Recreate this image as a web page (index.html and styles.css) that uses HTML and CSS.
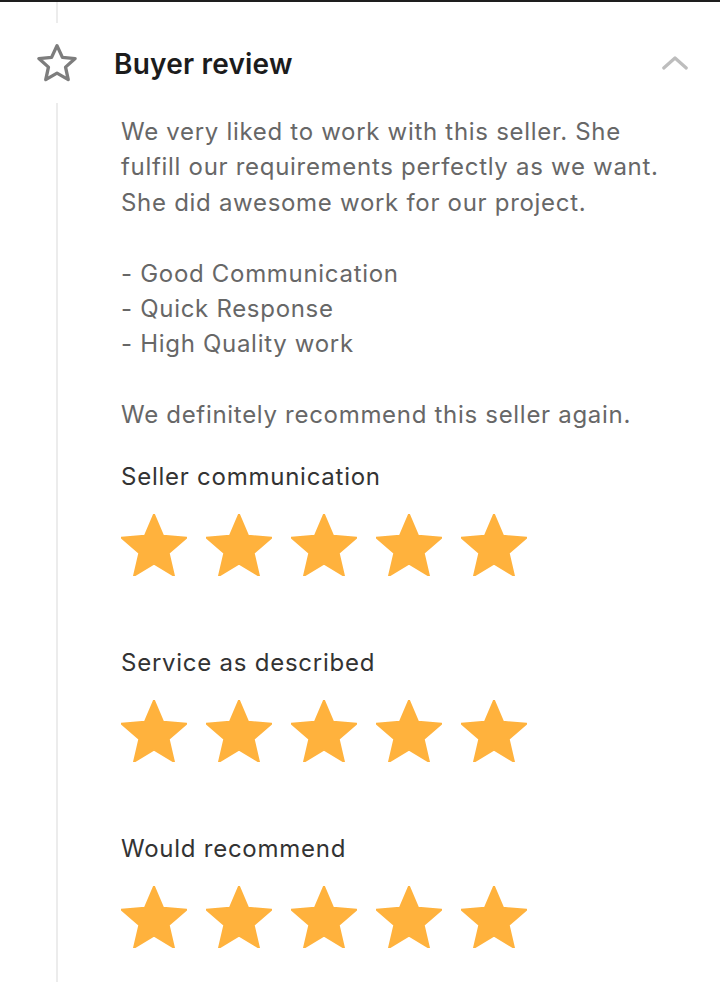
FILE: index.html
```html
<!DOCTYPE html>
<html>
<head>
    <meta charset="UTF-8">
    <meta name="viewport" content="width=device-width, initial-scale=1">
    <title>Buyer review</title>
    <link rel="stylesheet" href="styles.css">
</head>
<body>

<section class="review">
    <div class="rail">
        <span class="rail-line rail-line-top"></span>
        <svg class="rail-icon" viewBox="0 0 24 24">
            <path d="M12 3.2l2.6 5.6 6.1.6-4.6 4.1 1.3 6-5.4-3.1-5.4 3.1 1.3-6-4.6-4.1 6.1-.6z"/>
        </svg>
        <span class="rail-line"></span>
    </div>

    <div class="content">
        <header class="review-head">
            <h2>Buyer review</h2>
            <svg class="chevron" viewBox="0 0 24 24">
                <path d="M3 16l9-8 9 8"/>
            </svg>
        </header>

        <p class="review-text">We very liked to work with this seller. She
fulfill our requirements perfectly as we want.
She did awesome work for our project.

- Good Communication
- Quick Response
- High Quality work

We definitely recommend this seller again.</p>

        <div class="rating">
            <div class="rating-label">Seller communication</div>
            <div class="stars" data-score="5"></div>
        </div>
        <div class="rating">
            <div class="rating-label">Service as described</div>
            <div class="stars" data-score="5"></div>
        </div>
        <div class="rating">
            <div class="rating-label">Would recommend</div>
            <div class="stars" data-score="5"></div>
        </div>
    </div>
</section>

<script>
// fill each rating row with its stars
const starPath = 'M12 17.27L18.18 21l-1.64-7.03L22 9.24l-7.19-.61L12 2 9.19 8.63 2 9.24l5.46 4.73L5.82 21z';

document.querySelectorAll('.stars').forEach(row => {
    const score = Number(row.dataset.score);
    for (let i = 0; i < 5; i++) {
        row.insertAdjacentHTML('beforeend',
            `<svg class="star${i < score ? ' on' : ''}" viewBox="2 2 20 19"><path d="${starPath}"/></svg>`);
    }
});
</script>
</body>
</html>
```

FILE: styles.css
```css
*, *::after, *::before {
    box-sizing: border-box;
}

html, body {
    margin: 0;
    padding: 0;
    background: #fff;
    font-family: Inter, "Liberation Sans", sans-serif;
}

body {
    border-top: 2px solid #1e1e1e;
}

.review {
    display: flex;
    min-height: 980px;
}

.rail {
    width: 114px;
    flex: none;
    display: flex;
    flex-direction: column;
    align-items: center;
}

.rail-line {
    width: 2px;
    flex: 1;
    background: #ececec;
}

.rail-line-top {
    flex: none;
    height: 21px;
}

.rail-icon {
    width: 50px;
    height: 50px;
    margin: 16px 0 14px;
    fill: none;
    stroke: #7d7d7d;
    stroke-width: 1.6;
    stroke-linejoin: round;
}

.content {
    flex: 1;
    padding-right: 30px;
}

.review-head {
    display: flex;
    align-items: center;
    justify-content: space-between;
    height: 38px;
    margin-top: 43px;
}

.review-head h2 {
    margin: 0;
    font-size: 28px;
    font-weight: 600;
    letter-spacing: 0.2px;
    color: #1c1c1c;
}

.chevron {
    width: 30px;
    height: 30px;
    margin-top: -3px;
    fill: none;
    stroke: #bdbdbd;
    stroke-width: 2.6;
    stroke-linecap: round;
    stroke-linejoin: round;
}

.review-text {
    margin: 31px 0 0 7px;
    white-space: pre-line;
    font-size: 24px;
    line-height: 35.4px;
    letter-spacing: 0.7px;
    color: #676767;
}

.rating {
    margin-left: 7px;
}

.rating-label {
    margin-top: 29px;
    font-size: 24px;
    line-height: 30px;
    letter-spacing: 0.75px;
    color: #333;
}

.stars {
    display: flex;
    gap: 19px;
    margin-top: 22px;
    margin-bottom: 72px;
}

.star {
    width: 66px;
    height: 62px;
    fill: #ddd;
    stroke: #ddd;
    stroke-width: 0.5;
    stroke-linejoin: round;
}

.star.on {
    fill: #ffb23d;
    stroke: #ffb23d;
}
```
